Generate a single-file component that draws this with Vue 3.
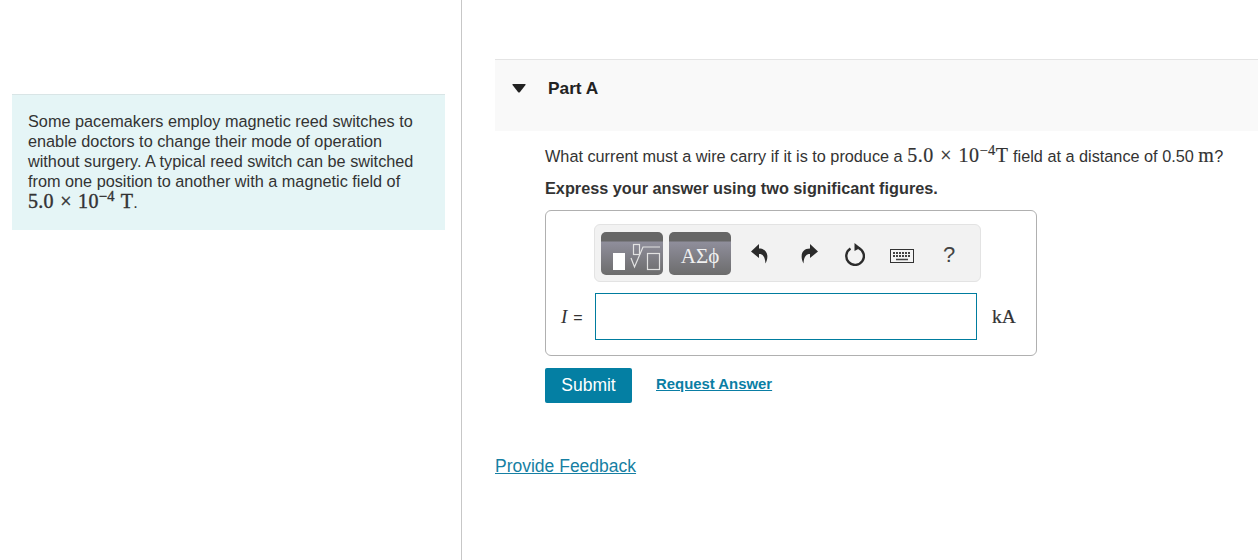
<template>
  <div class="page">
    <aside class="side">
      <div class="intro">
        Some pacemakers employ magnetic reed switches to enable doctors to change their mode of operation without surgery. A typical reed switch can be switched from one position to another with a magnetic field of
        <span class="math math-bold">5.0 × 10<sup>−4</sup> T</span><span class="dot">.</span>
      </div>
    </aside>
    <main class="main">
      <div class="part-head">
        <svg class="caret" width="14" height="9" viewBox="0 0 14 9"><path d="M1 0h12q1 0 .500 1L8 8q-1 1-2 0L.500 1Q0 0 1 0z" fill="#222" /></svg>
        <span class="part-title">Part A</span>
      </div>
      <div class="part-body">
        <p class="question">
          What current must a wire carry if it is to produce a
          <span class="math">5.0 × 10<sup>−4</sup>T</span>
          field at a distance of 0.50 <span class="math">m</span>?
        </p>
        <p class="hint">Express your answer using two significant figures.</p>
        <div class="answer-box">
          <div class="toolbar">
            <button class="tmpl-btn">
              <svg width="62" height="43" viewBox="0 0 62 43">
                <rect x="12" y="21" width="12" height="17" fill="#fff" />
                <g fill="none" stroke="#e2e2e2" stroke-width="1.2">
                  <rect x="32.500" y="12.500" width="6" height="10" />
                  <path d="M30 26l3.500 9 8.500-20h17" />
                  <rect x="46.500" y="21.500" width="12" height="16" />
                </g>
              </svg>
            </button>
            <button class="tmpl-btn greek">ΑΣϕ</button>
            <svg class="undo" width="18" height="20" viewBox="0 0 18 20"><path d="M8 0 0 7.500 8 14v-4c4 0 6 2.500 6.500 9.500C18 13 17 4.500 8 4.500z" fill="#2b2b2b" /></svg>
            <svg class="redo" width="18" height="20" viewBox="0 0 18 20"><path d="M10 0l8 7.500-8 6.500v-4c-4 0-6 2.500-6.500 9.500C0 13 1 4.500 10 4.500z" fill="#2b2b2b" /></svg>
            <svg class="reset" width="20" height="23" viewBox="0 0 20 23">
              <path d="M5.500 5.600a8.800 8.800 0 1 0 8-.6" fill="none" stroke="#2b2b2b" stroke-width="2.400" />
              <path d="M9.500 0l6 4.800-6 3.200z" fill="#2b2b2b" />
            </svg>
            <svg class="keys" width="24" height="14" viewBox="0 0 24 14">
              <rect x="0.500" y="0.500" width="23" height="13" fill="#f4f4f4" stroke="#333" />
              <path d="M3 4h18M3 7h18" stroke="#444" stroke-width="2" stroke-dasharray="2 1" />
              <path d="M6 10.500h12" stroke="#444" stroke-width="1.500" />
            </svg>
            <span class="help">?</span>
          </div>
          <div class="input-row">
            <span class="label"><i>I</i><span class="eq">=</span></span>
            <div class="input"></div>
            <span class="unit">kA</span>
          </div>
        </div>
        <div class="actions">
          <button class="submit">Submit</button>
          <a class="request" href="#">Request Answer</a>
        </div>
      </div>
      <a class="feedback" href="#">Provide Feedback</a>
    </main>
  </div>
</template>

<script setup>
</script>

<style>
body {
  background: #fff;
}
</style>

<style scoped>
.page {
  display: flex;
  height: 560px;
  overflow: hidden;
  font-family: "Liberation Sans", Arial, sans-serif;
  font-size: 16.25px;
  color: #333;
}
.side {
  width: 461px;
  flex: none;
  border-right: 1px solid #c7c7c7;
  padding-top: 94px;
}
.intro {
  width: 433px;
  margin-left: 12px;
  box-sizing: border-box;
  height: 136px;
  padding: 16px 16px 0;
  background: #e5f5f6;
  border-top: 1px solid #d9e5e6;
  line-height: 20px;
}
.math {
  font-family: "Liberation Serif", "DejaVu Serif", serif;
  font-size: 20px;
  line-height: 1;
  white-space: nowrap;
  word-spacing: 1px;
  letter-spacing: 0.5px;
  -webkit-text-stroke: 0.2px #333;
}
.math-bold {
  letter-spacing: 0.3px;
  word-spacing: 1px;
  -webkit-text-stroke: 0.4px #333;
}
.math sup {
  font-size: 14.5px;
  line-height: 0;
  vertical-align: 7px;
}
.main {
  flex: 1;
  padding: 59px 0 0 33px;
  min-width: 0;
}
.part-head {
  height: 72px;
  box-sizing: border-box;
  background: #f9f9f9;
  border-top: 1px solid #e4e4e4;
  display: flex;
  align-items: flex-start;
  padding: 18px 0 0 17px;
}
.caret {
  margin-top: 6px;
}
.part-title {
  margin-left: 22px;
  font-weight: 700;
  font-size: 17.3px;
  line-height: 20px;
  color: #222;
}
.part-body {
  padding-left: 50px;
}
.question {
  margin: 14px 0 0;
  line-height: 22px;
  white-space: nowrap;
}
.hint {
  margin: 10px 0 0;
  font-weight: 700;
  line-height: 22px;
}
.answer-box {
  width: 492px;
  height: 146px;
  box-sizing: border-box;
  margin-top: 11px;
  padding: 13px 0 0 48px;
  border: 1px solid #b0b0b0;
  border-radius: 6px;
}
.toolbar {
  width: 387px;
  height: 58px;
  box-sizing: border-box;
  background: #f2f2f2;
  border: 1px solid #e3e3e3;
  border-radius: 6px;
  display: flex;
  align-items: center;
  padding: 0 0 0 6px;
}
.tmpl-btn {
  width: 62px;
  height: 43px;
  padding: 0;
  border: none;
  border-radius: 5px;
  background: linear-gradient(#666 0, #666 9px, #8f8e9b 10px, #6c6c6c 100%);
  display: block;
}
.tmpl-btn svg {
  display: block;
}
.greek {
  margin-left: 6px;
  padding-top: 6px;
  color: #f0f0f0;
  font-family: "Liberation Serif", serif;
  font-size: 21px;
  line-height: 34px;
}
.undo {
  margin-left: 20px;
  margin-top: 2px;
}
.redo {
  margin-left: 31px;
  margin-top: 2px;
}
.reset {
  margin-left: 27px;
  margin-top: 2px;
}
.keys {
  margin-left: 25px;
  margin-top: 6px;
}
.help {
  margin-left: 29px;
  margin-top: 4px;
  font-size: 22px;
  color: #444;
}
.input-row {
  display: flex;
  align-items: center;
  margin: 11px 0 0 -48px;
}
.label {
  width: 34px;
  margin-left: 15px;
  font-family: "Liberation Serif", serif;
  font-size: 19px;
}
.label i {
  margin-right: 6px;
}
.eq {
  font-family: "Liberation Sans", sans-serif;
  font-size: 16px;
}
.input {
  width: 382px;
  height: 47px;
  box-sizing: border-box;
  border: 1px solid #007c9e;
  background: #fff;
}
.unit {
  margin-left: 15px;
  font-family: "Liberation Serif", serif;
  font-size: 19.5px;
  -webkit-text-stroke: 0.2px #333;
}
.actions {
  display: flex;
  align-items: center;
  margin-top: 12px;
}
.submit {
  width: 87px;
  height: 35px;
  padding: 0;
  border: none;
  border-radius: 2px;
  background: #047fa3;
  color: #fff;
  font-family: "Liberation Sans", sans-serif;
  font-size: 17.500px;
}
.request {
  margin-left: 24px;
  margin-top: -4px;
  font-weight: 700;
  font-size: 14.9px;
  color: #0a7ea4;
}
.feedback {
  display: inline-block;
  margin-top: 52px;
  font-size: 17.500px;
  line-height: 22px;
  color: #167fa3;
}
</style>
